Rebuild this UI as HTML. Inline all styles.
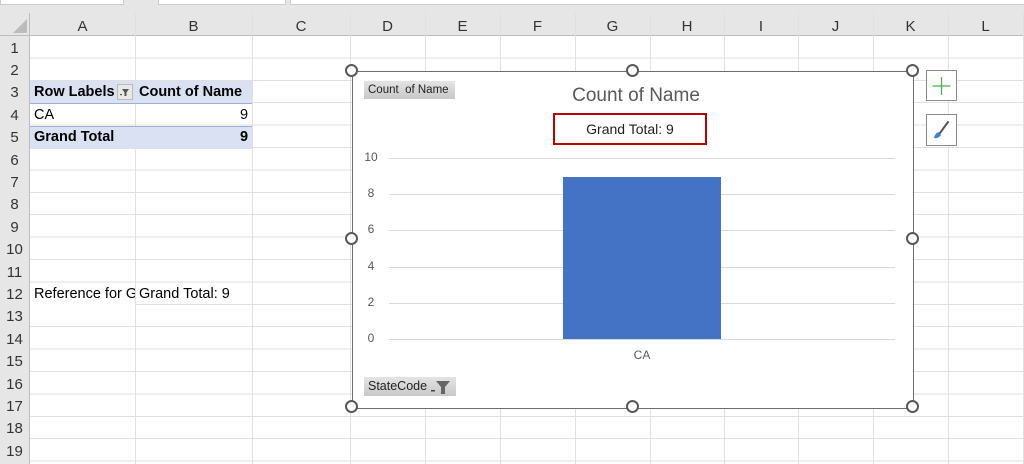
<!DOCTYPE html>
<html><head><style>
body{margin:0;width:1024px;height:464px;overflow:hidden;background:#fff;font-family:"Liberation Sans",Calibri,sans-serif;position:relative}
.a{position:absolute}
.grid{position:absolute;left:30px;top:36px;width:994px;height:428px;background:repeating-linear-gradient(to bottom,transparent 0,transparent 21.4px,#e0e0e0 21.4px,#e0e0e0 22.4px)}
.vl{position:absolute;top:13px;width:1px;height:451px;background:#e0e0e0}
.hh{position:absolute;top:13px;height:23px;font-size:15px;color:#333;text-align:center;line-height:27px}
.rh{position:absolute;left:0;width:29px;height:22.4px;font-size:15px;color:#333;text-align:center;line-height:23px}
.c{position:absolute;font-size:14.5px;color:#000;line-height:22px;white-space:nowrap}
.hd{position:absolute;width:9px;height:9px;border:2px solid #595959;border-radius:50%;background:#fff}
.yl{position:absolute;left:364px;width:14px;font-size:12px;color:#595959;text-align:center}
.gl{position:absolute;left:389px;width:506px;height:1px;background:#d9d9d9}
</style></head><body>
<div class="a" style="left:0;top:0;width:1024px;height:36px;background:#e6e6e6"></div>
<div class="a" style="left:0;top:0;width:122px;height:4px;background:#fff;border:1px solid #ccc;border-top:0"></div>
<div class="a" style="left:158px;top:0;width:126px;height:4px;background:#fff;border:1px solid #ccc;border-top:0"></div>
<div class="a" style="left:290px;top:0;width:734px;height:4px;background:#fff;border:1px solid #ccc;border-top:0"></div>
<div class="a" style="left:0;top:36px;width:29px;height:428px;background:#e6e6e6"></div>
<div class="a" style="left:0;top:35px;width:1024px;height:1px;background:#bdbdbd"></div>
<div class="a" style="left:29px;top:13px;width:1px;height:451px;background:#bdbdbd"></div>
<svg class="a" style="left:12px;top:18px" width="16" height="16"><polygon points="15,1 15,15 1,15" fill="#bcbcbc"/></svg>
<div class="grid"></div>
<div class="vl" style="left:135px"></div><div class="vl" style="left:252px"></div><div class="vl" style="left:350px"></div><div class="vl" style="left:425px"></div><div class="vl" style="left:500px"></div><div class="vl" style="left:575px"></div><div class="vl" style="left:650px"></div><div class="vl" style="left:724px"></div><div class="vl" style="left:798px"></div><div class="vl" style="left:873px"></div><div class="vl" style="left:948px"></div><div class="vl" style="left:1023px"></div>
<div class="hh" style="left:30px;width:105px">A</div><div class="hh" style="left:135px;width:117px">B</div><div class="hh" style="left:252px;width:98px">C</div><div class="hh" style="left:350px;width:75px">D</div><div class="hh" style="left:425px;width:75px">E</div><div class="hh" style="left:500px;width:75px">F</div><div class="hh" style="left:575px;width:75px">G</div><div class="hh" style="left:650px;width:74px">H</div><div class="hh" style="left:724px;width:74px">I</div><div class="hh" style="left:798px;width:75px">J</div><div class="hh" style="left:873px;width:75px">K</div><div class="hh" style="left:948px;width:75px">L</div>
<div class="rh" style="top:36.6px">1</div><div class="rh" style="top:59px">2</div><div class="rh" style="top:81.4px">3</div><div class="rh" style="top:103.8px">4</div><div class="rh" style="top:126.2px">5</div><div class="rh" style="top:148.6px">6</div><div class="rh" style="top:171px">7</div><div class="rh" style="top:193.4px">8</div><div class="rh" style="top:215.8px">9</div><div class="rh" style="top:238.2px">10</div><div class="rh" style="top:260.6px">11</div><div class="rh" style="top:283px">12</div><div class="rh" style="top:305.4px">13</div><div class="rh" style="top:327.8px">14</div><div class="rh" style="top:350.2px">15</div><div class="rh" style="top:372.6px">16</div><div class="rh" style="top:395px">17</div><div class="rh" style="top:417.4px">18</div><div class="rh" style="top:439.8px">19</div>
<div class="a" style="left:30px;top:81px;width:222px;height:22px;background:#d9e1f2;border-bottom:1px solid #9bb0d8"></div>
<div class="a" style="left:30px;top:126px;width:222px;height:22px;background:#d9e1f2;border-top:1px solid #9bb0d8"></div>
<div class="c" style="left:34px;top:81px;font-weight:bold">Row Labels</div>
<div class="a" style="left:117px;top:84px;width:16px;height:16px;background:#e8e8e8;border:1px solid #bbb;box-sizing:border-box"></div>
<svg class="a" style="left:119px;top:86px" width="12" height="12"><path d="M3,3 H10 L7.5,6.5 V10 H5.5 V6.5Z" fill="#555"/><rect x="1" y="8" width="2" height="1.2" fill="#555"/></svg>
<div class="c" style="left:139px;top:81px;font-weight:bold">Count of Name</div>
<div class="c" style="left:34px;top:104px">CA</div>
<div class="c" style="left:240px;top:104px">9</div>
<div class="c" style="left:34px;top:126px;font-weight:bold">Grand Total</div>
<div class="c" style="left:240px;top:126px;font-weight:bold">9</div>
<div class="a" style="left:30px;top:284px;width:105px;height:21px;background:#fff;overflow:hidden"><div class="c" style="left:4px;top:-1px">Reference for Grand</div></div>
<div class="c" style="left:139px;top:283px">Grand Total: 9</div>
<!-- chart -->
<div class="a" style="left:352px;top:71px;width:560px;height:336px;background:#fff;border:1px solid #6e6e6e"></div>
<div class="a" style="left:364px;top:81px;width:91px;height:18px;background:linear-gradient(#e4e4e4,#c8c8c8);font-size:11.5px;line-height:18px;text-indent:4px;color:#222">Count&nbsp; of Name</div>
<div class="a" style="left:520px;top:85px;width:232px;text-align:center;font-size:19px;color:#595959">Count of Name</div>
<div class="a" style="left:553px;top:113px;width:150px;height:28px;border:2px solid #c00000;text-align:center;font-size:14px;line-height:28px;color:#222">Grand Total: 9</div>
<div class="gl" style="top:158px"></div><div class="gl" style="top:194px"></div><div class="gl" style="top:230px"></div><div class="gl" style="top:267px"></div><div class="gl" style="top:303px"></div><div class="gl" style="top:339px"></div>
<div class="yl" style="top:150px;left:362px;width:18px">10</div><div class="yl" style="top:186px">8</div><div class="yl" style="top:222px">6</div><div class="yl" style="top:259px">4</div><div class="yl" style="top:295px">2</div><div class="yl" style="top:331px">0</div>
<div class="a" style="left:563px;top:177px;width:158px;height:162px;background:#4472c4"></div>
<div class="a" style="left:622px;top:348px;width:40px;text-align:center;font-size:12px;color:#595959">CA</div>
<div class="a" style="left:364px;top:377px;width:92px;height:19px;background:linear-gradient(#e4e4e4,#c8c8c8);font-size:12.5px;line-height:19px;text-indent:4px;color:#222">StateCode</div>
<svg class="a" style="left:428px;top:379px" width="26" height="16"><rect x="3" y="11" width="4" height="1.5" fill="#444"/><path d="M8,2 H22 L17,8 V15 H13 V8Z" fill="#666"/></svg>
<div class="hd" style="left:345px;top:64px"></div><div class="hd" style="left:626px;top:64px"></div><div class="hd" style="left:906px;top:64px"></div>
<div class="hd" style="left:345px;top:232px"></div><div class="hd" style="left:906px;top:232px"></div>
<div class="hd" style="left:345px;top:400px"></div><div class="hd" style="left:626px;top:400px"></div><div class="hd" style="left:906px;top:400px"></div>
<div class="a" style="left:926px;top:70px;width:31px;height:31px;background:#fff;border:1px solid #8a8a8a;box-sizing:border-box"></div>
<svg class="a" style="left:926px;top:70px" width="31" height="31"><path d="M15.5,7 V25 M6.5,16 H24.5" stroke="#4caf50" stroke-width="1.3"/></svg>
<div class="a" style="left:926px;top:114px;width:31px;height:32px;background:#fff;border:1px solid #8a8a8a;box-sizing:border-box"></div>
<svg class="a" style="left:926px;top:114px" width="31" height="32"><path d="M22,8 L14,19" stroke="#555" stroke-width="2" stroke-linecap="round"/><path d="M13,18 Q9,19 8,24 Q12,25 15,21Z" fill="#3d7fd6"/></svg>
</body></html>
